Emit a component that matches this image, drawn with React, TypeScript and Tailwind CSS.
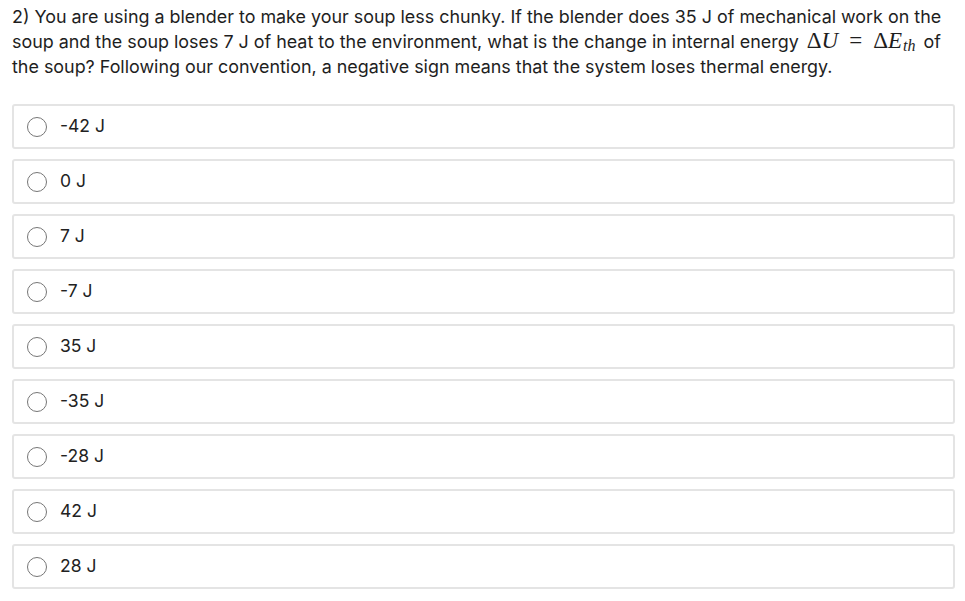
import React from "react";

const options = ["-42 J", "0 J", "7 J", "-7 J", "35 J", "-35 J", "-28 J", "42 J", "28 J"];

function Math() {
  return (
    <span className="whitespace-nowrap text-[23px] leading-[0] ml-[3px]" style={{ fontFamily: '"Liberation Serif", "DejaVu Serif", serif' }}>
      Δ<i>U</i>
      <span className="mx-[11px]">=</span>
      Δ<i>E</i>
      <span className="text-[16px] italic relative top-[3px] leading-[0] ml-[1px] mr-[3px]">th</span>
    </span>
  );
}

export default function App() {
  return (
    <div className="bg-white w-[965px] min-h-[601px] pl-3 pr-[10px] pt-1 text-[#1e1e1e]" style={{ fontFamily: 'Inter, "Noto Sans", sans-serif' }}>
      <p className="text-[17.9px] leading-[25px]">
        <span className="block whitespace-nowrap h-[25px]">
          2) You are using a blender to make your soup less chunky. If the blender does 35 J of mechanical work on the
        </span>
        <span className="block whitespace-nowrap h-[25px]">
          soup and the soup loses 7 J of heat to the environment, what is the change in internal energy <Math /> of
        </span>
        <span className="block whitespace-nowrap h-[25px]">
          the soup? Following our convention, a negative sign means that the system loses thermal energy.
        </span>
      </p>
      <div className="mt-[25px] flex flex-col gap-[10px]">
        {options.map((o) => (
          <div key={o} className="h-[45px] border-2 border-[#e4e4e4] rounded-[3px] flex items-center pl-[13px]">
            <span className="w-5 h-5 rounded-full border border-[#767676] shrink-0" />
            <span className="ml-[13px] text-[17.5px] text-[#222]">{o}</span>
          </div>
        ))}
      </div>
    </div>
  );
}
